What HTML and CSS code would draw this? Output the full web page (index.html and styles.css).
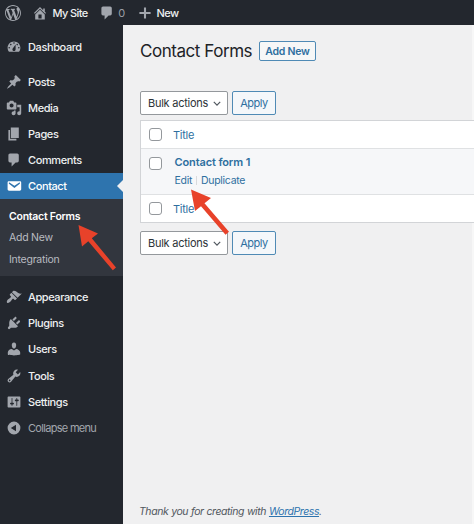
FILE: index.html
```
<!DOCTYPE html>
<html lang="en">
<head>
  <meta charset="UTF-8" />
  <meta name="viewport" content="width=device-width, initial-scale=1.0" />
  <title>Contact Forms - My Site</title>
  <link rel="stylesheet" href="styles.css">
</head>
<body>
  <header class="adminbar">
    <svg class="logo" viewBox="0 0 20 20"><path d="M20 10c0-5.51-4.49-10-10-10C4.48 0 0 4.49 0 10c0 5.52 4.48 10 10 10 5.51 0 10-4.48 10-10zM7.78 15.37L4.37 6.22c.55-.02 1.17-.08 1.17-.08.5-.06.44-1.13-.06-1.11 0 0-1.45.11-2.37.11-.18 0-.37 0-.58-.01C4.12 2.69 6.87 1.11 10 1.11c2.33 0 4.45.87 6.05 2.34-.68-.11-1.65.39-1.65 1.58 0 .74.45 1.36.9 2.1.35.61.55 1.36.55 2.46 0 1.49-1.4 5-1.4 5l-3.03-8.37c.54-.02.82-.17.82-.17.5-.05.44-1.25-.06-1.22 0 0-1.44.12-2.38.12-.87 0-2.33-.12-2.33-.12-.5-.03-.56 1.2-.06 1.22l.92.08 1.26 3.41zM17.41 10c.24-.64.74-1.87.43-4.25.7 1.29 1.05 2.71 1.05 4.25 0 3.29-1.73 6.24-4.4 7.78.97-2.59 1.94-5.2 2.92-7.78zM6.1 18.09C3.12 16.65 1.11 13.53 1.11 10c0-1.3.23-2.48.72-3.59C3.25 10.3 4.67 14.2 6.1 18.09zm4.03-6.63l2.58 6.98c-.86.29-1.76.45-2.71.45-.79 0-1.57-.11-2.29-.33.81-2.38 1.62-4.74 2.42-7.1z"/></svg>
    <a class="site"><svg viewBox="0 0 20 20"><path d="M16 8.5l1.53 1.53-1.06 1.06L10 4.6l-6.47 6.49-1.06-1.06L10 2.5l4 4v-2h2v4zm-6-2.46l6 5.99V18H4v-5.97zM12 17v-5H8v5h4z"/></svg><span>My Site</span></a>
    <a class="bubble"><svg viewBox="0 0 20 20"><path d="M5 2h9c1.1 0 2 .9 2 2v7c0 1.1-.9 2-2 2h-2l-5 5v-5H5c-1.1 0-2-.9-2-2V4c0-1.1.9-2 2-2z"/></svg><span>0</span></a>
    <a class="new"><svg viewBox="0 0 20 20"><path d="M8.7 3h2.6v5.7H17v2.6h-5.7V17H8.7v-5.7H3V8.7h5.7z"/></svg><span>New</span></a>
  </header>

  <div class="wrap">
    <nav class="sidebar">
      <a class="item"><svg viewBox="0 0 20 20"><path d="M3.76 16h12.48c1.1-1.37 1.76-3.11 1.76-5 0-4.42-3.58-8-8-8s-8 3.58-8 8c0 1.89.66 3.63 1.76 5zM10 4c.55 0 1 .45 1 1s-.45 1-1 1-1-.45-1-1 .45-1 1-1zM6 6c.55 0 1 .45 1 1s-.45 1-1 1-1-.45-1-1 .45-1 1-1zm8 0c.55 0 1 .45 1 1s-.45 1-1 1-1-.45-1-1 .45-1 1-1zm-5.37 5.55L12 7v6c0 1.1-.9 2-2 2s-2-.9-2-2c0-.57.24-1.08.63-1.45zM4 10c.55 0 1 .45 1 1s-.45 1-1 1-1-.45-1-1 .45-1 1-1zm12 0c.55 0 1 .45 1 1s-.45 1-1 1-1-.45-1-1 .45-1 1-1z"/></svg><span>Dashboard</span></a>
      <div class="separator"></div>
      <a class="item"><svg viewBox="0 0 20 20"><path d="M10.44 3.02l1.82-1.82 6.36 6.35-1.83 1.82c-1.05-.68-2.48-.57-3.41.36l-.75.75c-.92.93-1.04 2.35-.35 3.41l-1.83 1.82-2.41-2.41-2.8 2.79c-.42.42-3.38 2.71-3.8 2.29s1.86-3.39 2.28-3.81l2.79-2.79L4.1 9.36l1.83-1.82c1.05.69 2.48.57 3.4-.36l.75-.75c.93-.92 1.05-2.35.36-3.41z"/></svg><span>Posts</span></a>
      <a class="item"><svg viewBox="0 0 20 20"><path d="M13 11V4c0-.55-.45-1-1-1h-1.67L9 1H5L3.67 3H2c-.55 0-1 .45-1 1v7c0 .55.45 1 1 1h10c.55 0 1-.45 1-1zM7 4.5c1.38 0 2.5 1.12 2.5 2.5S8.38 9.5 7 9.5 4.5 8.38 4.5 7 5.62 4.5 7 4.5zM14 6h5v10.5c0 1.38-1.12 2.5-2.5 2.5S14 17.88 14 16.5s1.12-2.5 2.5-2.5c.17 0 .34.02.5.05V9h-3V6zm-4 8.05V13h2v3.5c0 1.38-1.12 2.5-2.5 2.5S7 17.88 7 16.5 8.12 14 9.5 14c.17 0 .34.02.5.05z"/></svg><span>Media</span></a>
      <a class="item"><svg viewBox="0 0 20 20"><path d="M6 15V2h10v13H6zm-1 1h8v2H3V5h2v11z"/></svg><span>Pages</span></a>
      <a class="item"><svg viewBox="0 0 20 20"><path d="M5 2h9c1.1 0 2 .9 2 2v7c0 1.1-.9 2-2 2h-2l-5 5v-5H5c-1.1 0-2-.9-2-2V4c0-1.1.9-2 2-2z"/></svg><span>Comments</span></a>
      <a class="item current"><svg viewBox="0 0 20 20"><path d="M3.87 4h13.25C18.37 4 19 4.59 19 5.79v8.42c0 1.19-.63 1.79-1.88 1.79H3.87c-1.25 0-1.88-.6-1.88-1.79V5.79c0-1.2.63-1.79 1.88-1.79zm6.62 8.6l6.74-5.53c.24-.2.43-.66.13-1.07-.29-.41-.82-.42-1.17-.17l-5.7 3.86L4.8 5.83c-.35-.25-.88-.24-1.17.17-.3.41-.11.87.13 1.07z"/></svg><span>Contact</span></a>
      <div class="submenu">
        <a class="active">Contact Forms</a>
        <a>Add New</a>
        <a>Integration</a>
      </div>
      <div class="separator small"></div>
      <a class="item"><svg viewBox="0 0 20 20"><path d="M14.48 11.06L7.41 3.99l1.5-1.5c.5-.56 2.3-.47 3.51.32 1.21.8 1.43 1.28 2.91 2.1 1.18.64 2.45 1.26 4.45.85zm-.71.71L6.7 4.7 4.93 6.47c-.39.39-.39 1.02 0 1.41l1.06 1.06c.39.39.39 1.03 0 1.42-.6.6-1.43 1.11-2.21 1.69-.35.26-.7.53-1.01.84C1.43 14.23.4 16.08 1.4 17.07c.99 1 2.84-.03 4.18-1.36.31-.31.58-.66.85-1.02.57-.78 1.08-1.61 1.69-2.21.39-.39 1.02-.39 1.41 0l1.06 1.06c.39.39 1.02.39 1.41 0z"/></svg><span>Appearance</span></a>
      <a class="item"><svg viewBox="0 0 20 20"><path d="M13.11 4.36L9.87 7.6 8 5.73l3.24-3.24c.35-.34 1.05-.2 1.56.32.52.51.66 1.21.31 1.55zm-8 1.77l.91-1.12 9.01 9.01-1.19.84c-.71.71-2.63 1.16-3.82 1.16H6.14L4.9 17.26c-.59.59-1.54.59-2.12 0-.59-.58-.59-1.53 0-2.12l1.24-1.24v-3.88c0-1.13.4-3.19 1.09-3.89zm7.26 3.97l3.24-3.24c.34-.35 1.04-.21 1.55.31.52.51.66 1.21.31 1.55l-3.24 3.25z"/></svg><span>Plugins</span></a>
      <a class="item"><svg viewBox="0 0 20 20"><path d="M10 9.25c-2.27 0-2.73-3.44-2.73-3.44C7 4.02 7.82 2 9.97 2c2.16 0 2.98 2.02 2.71 3.81 0 0-.41 3.44-2.68 3.44zm0 2.57L12.72 10c2.39 0 5.02 2.33 5.02 4.53v2.49s-3.65 1.13-7.74 1.13c-3.65 0-7.74-1.13-7.74-1.13v-2.49c0-2.25 2.44-4.48 4.97-4.48z"/></svg><span>Users</span></a>
      <a class="item"><svg viewBox="0 0 20 20"><path d="M16.68 9.77c-1.34 1.34-3.3 1.67-4.95.99l-5.41 6.52c-.99.99-2.59.99-3.58 0s-.99-2.59 0-3.57l6.52-5.42c-.68-1.65-.35-3.61.99-4.95 1.28-1.28 3.12-1.62 4.72-1.06l-2.89 2.89 2.82 2.82 2.86-2.87c.53 1.58.18 3.39-1.08 4.65zM3.81 16.21c.4.39 1.04.39 1.43 0 .4-.4.4-1.04 0-1.43-.39-.4-1.03-.4-1.43 0-.39.39-.39 1.03 0 1.43z"/></svg><span>Tools</span></a>
      <a class="item"><svg viewBox="0 0 20 20"><path d="M18 16V4c0-.55-.45-1-1-1H3c-.55 0-1 .45-1 1v12c0 .55.45 1 1 1h14c.55 0 1-.45 1-1zM8 11h1c.55 0 1 .45 1 1s-.45 1-1 1H8v1.5c0 .28-.22.5-.5.5s-.5-.22-.5-.5V13H6c-.55 0-1-.45-1-1s.45-1 1-1h1V5.5c0-.28.22-.5.5-.5s.5.22.5.5V11zm5-2h-1c-.55 0-1-.45-1-1s.45-1 1-1h1V5.5c0-.28.22-.5.5-.5s.5.22.5.5V7h1c.55 0 1 .45 1 1s-.45 1-1 1h-1v5.5c0 .28-.22.5-.5.5s-.5-.22-.5-.5V9z"/></svg><span>Settings</span></a>
      <a class="item collapse"><svg viewBox="0 0 20 20"><path fill-rule="evenodd" d="M10 2a8 8 0 1 0 0 16 8 8 0 0 0 0-16zM12.5 5.8v8.4L6 10z"/></svg><span>Collapse menu</span></a>
    </nav>

    <main class="content">
      <div class="heading">
        <h1>Contact Forms</h1>
        <button class="add-new">Add New</button>
      </div>

      <div class="bulk">
        <button class="select"><span>Bulk actions</span><svg viewBox="0 0 10 6"><path d="M1 1l4 4 4-4"/></svg></button>
        <button class="apply">Apply</button>
      </div>

      <div class="table">
        <div class="row head"><i class="check"></i><a>Title</a></div>
        <div class="row form">
          <i class="check"></i>
          <div>
            <a class="form-title">Contact form 1</a>
            <div class="actions"><a>Edit</a><span class="bar"></span><a>Duplicate</a></div>
          </div>
        </div>
        <div class="row head"><i class="check"></i><a>Title</a></div>
      </div>

      <div class="bulk bottom">
        <button class="select"><span>Bulk actions</span><svg viewBox="0 0 10 6"><path d="M1 1l4 4 4-4"/></svg></button>
        <button class="apply">Apply</button>
      </div>

      <p class="footer">Thank you for creating with <a>WordPress</a>.</p>
    </main>
  </div>

  <!-- red pointers drawn over the page -->
  <svg class="pointers" viewBox="0 0 474 524">
    <path d="M78.5 225L98 233.500 91.800 238.300 116 267.500 112.800 270.300 88.300 241.300 82 246.500z"/>
    <path d="M191 189.500L211 198 204.500 203.200 229 231.800 225.500 234.800 201 206.200 195 211z"/>
  </svg>
</body>
</html>
```
FILE: styles.css
```
* { box-sizing: border-box; }
body { margin: 0; width: 474px; height: 524px; overflow: hidden; background: #f0f0f1; font-family: Inter, "Liberation Sans", sans-serif; font-size: 11px; letter-spacing: -0.25px; color: #2c3338; }
svg { display: block; flex: none; fill: #a2a6ad; }
button { margin: 0; padding: 0; font-family: inherit; font-size: 11px; letter-spacing: inherit; }

/* top bar */
.adminbar { display: flex; align-items: center; height: 25px; padding-left: 5px; background: #23272e; color: #eef0f1; font-weight: 500; letter-spacing: -0.6px; }
.adminbar a { display: flex; align-items: center; }
.adminbar svg { width: 16px; height: 16px; }
.site { margin-left: 11px; gap: 4.5px; }
.bubble { margin-left: 11px; gap: 3.5px; color: #9a9ea5; font-weight: 400; }
.new { margin-left: 12px; gap: 4px; }

.wrap { display: flex; height: 499px; }

/* side menu */
.sidebar { flex: none; width: 123px; padding-top: 9px; background: #23272e; }
.item { display: flex; align-items: center; gap: 6px; height: 26.1px; padding-left: 6px; color: #eef0f1; font-weight: 500; letter-spacing: -0.4px; }
.item svg { width: 16px; height: 16px; }
.separator { height: 8.7px; }
.separator.small { height: 8px; }
.current { position: relative; background: #2e74ae; color: #fff; }
.current svg { fill: #fff; }
.current::after { content: ""; position: absolute; right: 0; top: 7px; border: 6px solid transparent; border-left: 0; border-right-color: #f0f0f1; }
.submenu { display: flex; flex-direction: column; height: 77px; padding: 6.5px 0 0 9px; background: #32363e; font-size: 10.5px; }
.submenu a { line-height: 21.5px; color: #b9bcc1; }
.submenu .active { color: #fff; font-weight: 600; }
.collapse { color: #a2a6ad; font-weight: 400; letter-spacing: -0.7px; }

/* page */
.content { display: flex; flex-direction: column; flex: 1; min-width: 0; padding-left: 17px; border-right: 2px solid #f7f7f7; }
.heading { display: flex; align-items: center; margin-top: 15px; height: 22px; }
h1 { width: 119px; margin: 0; font-size: 17px; font-weight: 400; letter-spacing: -0.45px; color: #1d2327; white-space: nowrap; }
.add-new { width: 57px; height: 20px; border: 1px solid #4f8ab5; border-radius: 2px; background: #f6f7f7; color: #2e6f9f; font-weight: 600; font-size: 10.5px; }
.bulk { display: flex; gap: 4.5px; margin-top: 29px; height: 24px; }
.bulk.bottom { margin-top: 8px; }
.select { display: flex; align-items: center; justify-content: space-between; width: 87.5px; padding: 0 6px 0 7px; border: 1px solid #94989c; border-radius: 2px; background: #fff; color: #2c3338; }
.select svg { width: 8px; height: 5px; fill: none; stroke: #50575e; stroke-width: 1.5; overflow: visible; }
.apply { width: 44px; border: 1px solid #4f8ab5; border-radius: 2px; background: #f4f7fa; color: #2e6f9f; letter-spacing: -0.5px; }
.table { margin-top: 5px; margin-right: -2px; border: 1px solid #d2d4d7; border-right: 0; background: #fff; }
.row { display: flex; height: 27px; padding-left: 8px; gap: 11px; color: #2e6f9f; }
.head { align-items: center; }
.form { height: 47px; padding-top: 7px; border: solid #dfe1e3; border-width: 1px 0; background: #f6f7f9; gap: 12.5px; }
.check { flex: none; width: 13px; height: 13px; border: 1px solid #94989c; border-radius: 3px; background: #fff; }
.form .check { margin-top: 1px; }
.form-title { display: block; line-height: 13px; font-weight: 600; font-size: 11px; letter-spacing: -0.12px; }
.actions { display: flex; align-items: center; margin-top: 5px; line-height: 13px; font-size: 10.5px; letter-spacing: -0.3px; }
.bar { width: 1px; height: 9px; margin: 0 4px; background: #d8dadd; }
.footer { margin: auto 0 6px -1px; line-height: 13px; font-size: 10.5px; letter-spacing: -0.43px; word-spacing: 0.4px; font-style: italic; color: #50575e; }
.footer a { color: #2e74ae; text-decoration: underline; }

.pointers { position: absolute; left: 0; top: 0; width: 474px; height: 524px; fill: #e8422a; pointer-events: none; }
```
